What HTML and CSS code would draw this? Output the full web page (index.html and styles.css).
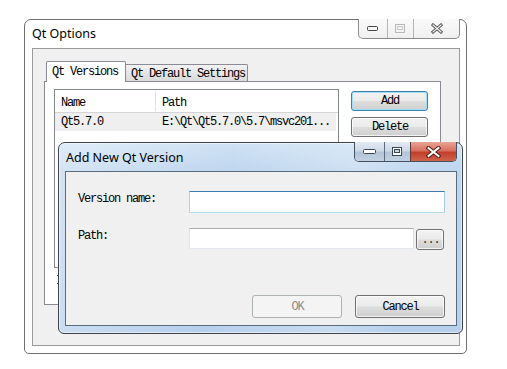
FILE: index.html
```html
<!DOCTYPE html>
<html>
<head>
<meta charset="utf-8">
<title>Qt Options</title>
<link rel="stylesheet" href="styles.css">
</head>
<body>
<div class="desktop">
  <div class="win main-win">
    <div class="titlebar">
      <span class="title">Qt Options</span>
      <div class="caps caps-inactive">
        <span class="cap cap-min">
          <svg width="12" height="6" viewBox="0 0 12 6"><rect x="0.5" y="0.5" width="10" height="4" rx="1" fill="#f4f4f4" stroke="#444"/></svg>
        </span>
        <span class="cap cap-max">
          <svg width="11" height="10" viewBox="0 0 11 10"><rect x="0.5" y="0.5" width="9" height="8" fill="none" stroke="#b8b8b8"/><rect x="2.5" y="2.5" width="5" height="3" fill="none" stroke="#c8c8c8"/></svg>
        </span>
        <span class="cap cap-close">
          <svg width="14" height="11" viewBox="0 0 14 11"><path d="M3 2 L11 9 M11 2 L3 9" stroke="#555" stroke-width="3" stroke-linecap="square"/><path d="M3 2 L11 9 M11 2 L3 9" stroke="#f6f6f6" stroke-width="1.2" stroke-linecap="square"/></svg>
        </span>
      </div>
    </div>
    <div class="client">
      <div class="tabwidget">
        <div class="tabbar">
          <span class="tab tab-active ui">Qt Versions</span>
          <span class="tab tab-inactive ui">Qt Default Settings</span>
        </div>
        <div class="pane">
          <div class="pane-top">
            <div class="tree ui">
              <div class="tree-head">
                <span class="col col-name">Name</span>
                <span class="col col-path">Path</span>
              </div>
              <div class="tree-row">
                <span class="col col-name">Qt5.7.0</span>
                <span class="col col-path">E:\Qt\Qt5.7.0\5.7\msvc201...</span>
              </div>
            </div>
            <div class="side-buttons">
              <button class="btn btn-focus ui">Add</button>
              <button class="btn ui">Delete</button>
            </div>
          </div>
          <div class="hint ui">Info</div>
        </div>
      </div>
    </div>
  </div>

  <div class="win dialog">
    <div class="titlebar dlg-titlebar">
      <span class="title">Add New Qt Version</span>
      <div class="caps caps-active">
        <span class="cap dcap dcap-min">
          <svg width="14" height="6" viewBox="0 0 14 6"><rect x="0.5" y="0.5" width="12" height="4" rx="1" fill="#fff" stroke="#3a4656"/></svg>
        </span>
        <span class="cap dcap dcap-max">
          <svg width="11" height="10" viewBox="0 0 11 10"><rect x="0.5" y="0.5" width="9" height="8" fill="#fff" stroke="#3a4656"/><rect x="2.5" y="2.5" width="5" height="3" fill="#c9d6e4" stroke="#3a4656"/></svg>
        </span>
        <span class="cap dcap dcap-close">
          <svg width="15" height="12" viewBox="0 0 15 12"><path d="M2.5 2 L12.5 10 M12.5 2 L2.5 10" stroke="#4a1b14" stroke-width="4" stroke-linecap="square"/><path d="M2.5 2 L12.5 10 M12.5 2 L2.5 10" stroke="#fff" stroke-width="2" stroke-linecap="square"/></svg>
        </span>
      </div>
    </div>
    <div class="dlg-client">
      <div class="form ui">
        <div class="form-row">
          <label class="form-label">Version name:</label>
          <input class="field field-focus" type="text">
        </div>
        <div class="form-row row-path">
          <label class="form-label">Path:</label>
          <input class="field field-path" type="text">
          <button class="btn btn-browse ui">...</button>
        </div>
      </div>
      <div class="dlg-buttons">
        <button class="btn btn-wide btn-disabled ui" disabled>OK</button>
        <button class="btn btn-wide ui">Cancel</button>
      </div>
    </div>
  </div>
</div>
</body>
</html>
```

FILE: styles.css
```css
* { box-sizing: border-box; }

html, body {
  margin: 0;
  padding: 0;
  background: #ffffff;
}

.desktop {
  position: relative;
  width: 507px;
  height: 369px;
  overflow: hidden;
  background: #ffffff;
}

.ui {
  font-family: "Liberation Mono", "DejaVu Sans Mono", monospace;
  font-size: 12px;
  letter-spacing: -1.2px;
  color: #000;
}

/* ---------- windows ---------- */
.win {
  position: absolute;
  display: flex;
  flex-direction: column;
}

.main-win {
  left: 24px;
  top: 19px;
  width: 443px;
  height: 335px;
  border: 1px solid #6f6f6f;
  border-radius: 7px 7px 5px 5px;
  background: #ffffff;
}

.titlebar {
  height: 28px;
  display: flex;
  justify-content: space-between;
  align-items: flex-start;
  flex: none;
}

.title {
  font-family: "Noto Sans", "Open Sans", sans-serif;
  font-size: 12.5px;
  line-height: 27px;
  padding-left: 7px;
  color: #000;
}

.caps {
  display: flex;
  margin-top: -1px;
  height: 20px;
  overflow: hidden;
}

.caps-inactive {
  margin-right: 6px;
  width: 102px;
  border: 1px solid #8c8c8c;
  border-top: none;
  border-radius: 0 0 5px 5px;
  background: linear-gradient(#fafafa, #f0f0f0);
}

.cap {
  display: flex;
  align-items: center;
  justify-content: center;
  height: 100%;
}

.cap-min { width: 28px; }
.cap-max { width: 26px; border-left: 1px solid #b4b4b4; }
.cap-close { flex: 1; border-left: 1px solid #b4b4b4; }

.client {
  margin: 0 6px 7px 7px;
  height: 298px;
  border: 1px solid #9b9b9b;
  background: #f0f0f0;
  padding: 12px 0 0 11px;
}

/* ---------- tabs ---------- */
.tabwidget {
  width: 397px;
}

.tabbar {
  display: flex;
  align-items: flex-end;
  height: 20px;
  padding-left: 2px;
  position: relative;
  z-index: 1;
}

.tab {
  display: flex;
  align-items: center;
  border: 1px solid #898c95;
  border-bottom: none;
}

.tab-active {
  height: 21px;
  margin-bottom: -1px;
  padding: 0 7px 0 5px;
  background: #ffffff;
  border-radius: 2px 2px 0 0;
}

.tab-inactive {
  height: 17px;
  padding: 1px 2px 0 5px;
  border-left: none;
  background: linear-gradient(#f2f2f2, #e6e6e6 50%, #d9d9d9);
  border-radius: 0 2px 0 0;
}

.pane {
  height: 224px;
  border: 1px solid #898c95;
  background: #ffffff;
  padding: 7px 0 0 9px;
}

.pane-top {
  display: flex;
  gap: 12px;
}

/* ---------- tree ---------- */
.tree {
  width: 285px;
  height: 179px;
  border: 1px solid #828790;
  background: #ffffff;
}

.tree-head {
  display: flex;
  height: 23px;
  border-bottom: 1px solid #d5d5d5;
  align-items: center;
  padding-top: 3px;
}

.tree-head .col-name {
  border-right: 1px solid #e3e3e3;
  height: 20px;
  display: flex;
  align-items: center;
  margin-top: -3px;
  padding-top: 3px;
}

.tree-row {
  display: flex;
  height: 18px;
  align-items: center;
  background: #efefef;
  margin-right: 2px;
}

.col-name {
  width: 101px;
  padding-left: 6px;
  flex: none;
}

.col-path {
  padding-left: 6px;
  white-space: nowrap;
}

.side-buttons {
  display: flex;
  flex-direction: column;
  gap: 6px;
  padding-top: 2px;
}

.hint {
  margin-top: 6px;
  padding-left: 2px;
}

/* ---------- buttons ---------- */
.btn {
  display: flex;
  align-items: center;
  justify-content: center;
  width: 77px;
  height: 20px;
  padding: 0 0 0 1px;
  border: 1px solid #707070;
  border-radius: 3px;
  background: linear-gradient(#f2f2f2, #ebebeb 48%, #dddddd 52%, #cfcfcf);
  box-shadow: inset 0 0 0 1px rgba(255, 255, 255, 0.75);
}

.btn-focus {
  border-color: #3c7fb1;
  box-shadow: inset 0 0 0 1px #a3dff8;
}

.btn-browse {
  width: 28px;
  height: 21px;
  margin-left: 2px;
  margin-top: 1px;
  color: #333;
}

.btn-wide {
  width: 90px;
  height: 23px;
}

.btn-disabled {
  color: #8a8a8a;
  border-color: #adb2b5;
  background: #f4f4f4;
  box-shadow: none;
}

/* ---------- dialog ---------- */
.dialog {
  left: 58px;
  top: 142px;
  width: 405px;
  height: 192px;
  border: 1px solid #3f4349;
  border-radius: 7px 7px 6px 6px;
  padding: 0 5px 7px 6px;
  background:
    linear-gradient(100deg, rgba(255,255,255,0.35) 0, rgba(255,255,255,0) 40%, rgba(255,255,255,0.25) 70%, rgba(255,255,255,0) 85%),
    linear-gradient(#cfe2f5, #bdd5ee 30px, #b6d0ec);
  box-shadow: inset 0 0 0 1px rgba(255,255,255,0.55);
}

.dlg-titlebar .title {
  padding-left: 1px;
  line-height: 29px;
}

.caps-active {
  width: 103px;
  margin-right: 0;
  border: 1px solid #45505e;
  border-top: none;
  border-radius: 0 0 5px 5px;
}

.dcap-min {
  width: 29px;
  background: linear-gradient(#e3ebf4, #cdd9e7 45%, #b4c4d8 55%, #c2d2e4);
}

.dcap-max {
  width: 26px;
  border-left: 1px solid #5d6b7c;
  background: linear-gradient(#e3ebf4, #cdd9e7 45%, #b4c4d8 55%, #c2d2e4);
}

.dcap-close {
  flex: 1;
  border-left: 1px solid #5d3a36;
  background: linear-gradient(#e8a597, #d8705f 45%, #c2402c 55%, #d0624c);
}

.dlg-client {
  flex: 1;
  border: 1px solid #5b6b7e;
  background: #f0f0f0;
  display: flex;
  flex-direction: column;
  justify-content: space-between;
  padding: 19px 11px 7px 12px;
}

.form {
  display: flex;
  flex-direction: column;
  gap: 15px;
}

.form-row {
  display: flex;
  align-items: flex-start;
}

.form-label {
  width: 111px;
  flex: none;
  line-height: 13px;
  padding-top: 2px;
}

.field {
  height: 22px;
  width: 256px;
  border: 1px solid #abadb3;
  border-color: #abadb3 #dbdfe6 #e3e9ef #e2e3ea;
  background: #ffffff;
  padding: 0;
  margin: 0;
  outline: none;
}

.field-focus {
  border-color: #3d7bad #a4c9e3 #b7d9ed #b5cfe7;
}

.field-path {
  width: 225px;
  height: 21px;
}

.dlg-buttons {
  display: flex;
  justify-content: flex-end;
  gap: 13px;
}
```
